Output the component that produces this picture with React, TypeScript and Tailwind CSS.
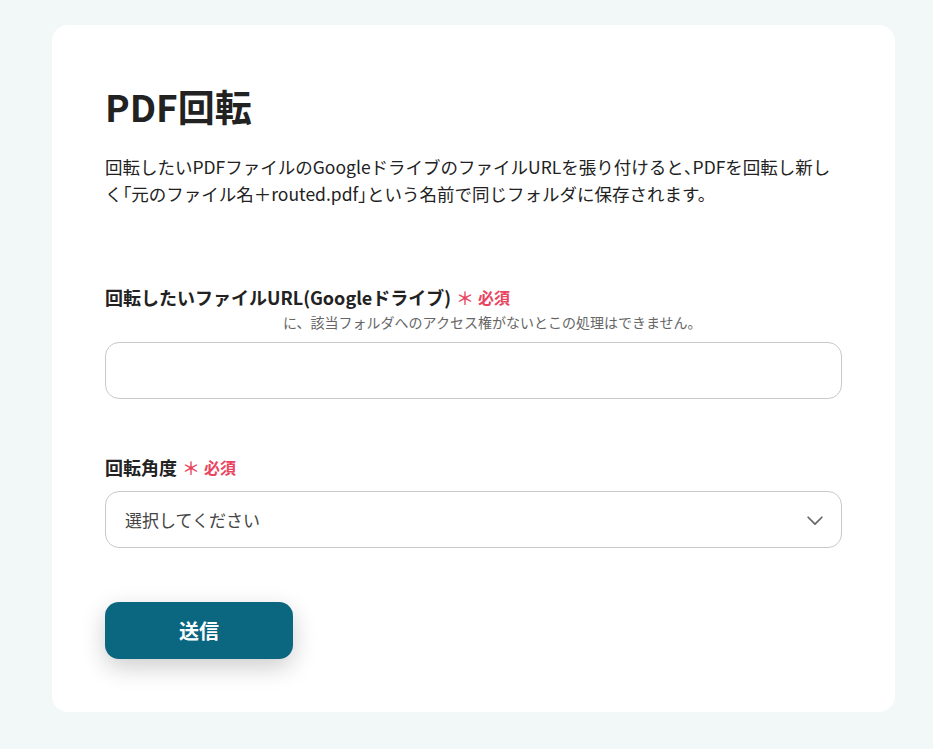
import React from 'react';

const font = { fontFamily: '"Noto Sans CJK JP", "Noto Sans", sans-serif' };

// compact punctuation, as in the reference
const P: React.FC<{ children: React.ReactNode }> = ({ children }) => (
  <span className="[font-feature-settings:'palt']">{children}</span>
);

const Required: React.FC = () => (
  <span className="ml-[5px] inline-flex items-center gap-[4px] text-[16px] font-bold text-[#e94560]">
    <span className="text-[18px] font-medium leading-none">＊</span>
    必須
  </span>
);

const App: React.FC = () => {
  return (
    <div className="min-h-[749px] bg-[#f2f8f8] pl-[52px] pr-[38px] pt-[25px] pb-[37px]" style={font}>
      <div className="rounded-[16px] bg-white px-[53px] pt-[57px] pb-[53px]">
        <h1 className="text-[37px] font-bold leading-[48px] text-[#222]">PDF回転</h1>

        <p className="mt-[23px] text-[17.5px] leading-[27px] text-[#222]">
          回転したいPDFファイルのGoogleドライブのファイルURLを張り付けると<P>、</P>PDFを回転し新しく<P>「</P>元のファイル名＋routed.pdf<P>」</P>という名前で同じフォルダに保存されます。
        </p>

        <div className="mt-[78px]">
          <label className="flex items-center text-[18px] font-bold leading-[24px] text-[#222]">
            回転したいファイルURL(Googleドライブ)
            <Required />
          </label>
          <p className="mt-[3px] pl-[178px] text-[14px] leading-[20px] text-[#666]">
            に、該当フォルダへのアクセス権がないとこの処理はできません。
          </p>
          <input
            type="text"
            className="mt-[10px] block h-[57px] w-full rounded-[14px] border border-[#c9c9c9] bg-white px-5 text-[17px] outline-none"
          />
        </div>

        <div className="mt-[56px]">
          <label className="flex items-center text-[18px] font-bold leading-[24px] text-[#222]">
            回転角度
            <Required />
          </label>
          <div className="mt-[12px] flex h-[57px] w-full items-center justify-between rounded-[14px] border border-[#c9c9c9] bg-white pl-[19px] pr-[15px]">
            <span className="text-[17px] text-[#444]">選択してください</span>
            <svg width="22" height="22" viewBox="0 0 24 24" fill="none" stroke="#666" strokeWidth="1.9" strokeLinecap="round" strokeLinejoin="round">
              <path d="M4.5 9l7.5 7.5 7.5-7.5" />
            </svg>
          </div>
        </div>

        <button className="mt-[54px] block h-[57px] w-[188px] rounded-[14px] bg-[#0b6680] text-[20px] font-bold text-white shadow-[0_8px_24px_rgba(0,0,0,0.2)]">
          送信
        </button>
      </div>
    </div>
  );
};

export default App;
